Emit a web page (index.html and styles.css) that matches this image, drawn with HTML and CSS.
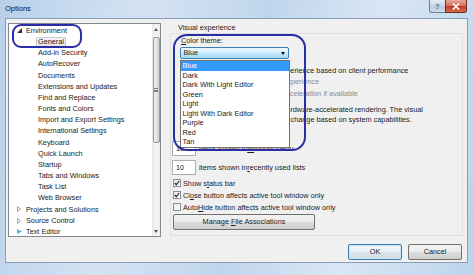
FILE: index.html
```html
<!DOCTYPE html>
<html lang="en">
<head>
  <meta charset="UTF-8">
  <title>Options</title>
  <link rel="stylesheet" href="styles.css">
</head>
<body>
  <div class="window">
    <!-- Tittellinje -->
    <div class="titlebar">
      <span class="title">Options</span>
      <div class="caption">
        <span class="cap-btn help">?</span>
        <span class="cap-btn close">
          <svg width="8" height="7" viewBox="0 0 8 7"><path d="M1 0.5 L7 6.5 M7 0.5 L1 6.5" stroke="#fff" stroke-width="1.6"/></svg>
        </span>
      </div>
    </div>

    <div class="client">
      <div class="main">
        <!-- Trevisning -->
        <div class="tree">
          <ul class="nodes">
            <li class="top"><span class="twisty"><svg width="5" height="5" viewBox="0 0 5 5"><polygon points="5,0 5,5 0,5" fill="#333"/></svg></span>Environment</li>
            <li class="child"><span class="item sel">General</span></li>
            <li class="child"><span class="item">Add-in Security</span></li>
            <li class="child"><span class="item">AutoRecover</span></li>
            <li class="child"><span class="item">Documents</span></li>
            <li class="child"><span class="item">Extensions and Updates</span></li>
            <li class="child"><span class="item">Find and Replace</span></li>
            <li class="child"><span class="item">Fonts and Colors</span></li>
            <li class="child"><span class="item">Import and Export Settings</span></li>
            <li class="child"><span class="item">International Settings</span></li>
            <li class="child"><span class="item">Keyboard</span></li>
            <li class="child"><span class="item">Quick Launch</span></li>
            <li class="child"><span class="item">Startup</span></li>
            <li class="child"><span class="item">Tabs and Windows</span></li>
            <li class="child"><span class="item">Task List</span></li>
            <li class="child"><span class="item">Web Browser</span></li>
            <li class="top"><span class="twisty"><svg width="4" height="6" viewBox="0 0 4 6"><polygon points="0.5,0.5 3.5,3 0.5,5.5" fill="none" stroke="#9a9a9a" stroke-width="0.9"/></svg></span>Projects and Solutions</li>
            <li class="top"><span class="twisty"><svg width="4" height="6" viewBox="0 0 4 6"><polygon points="0.5,0.5 3.5,3 0.5,5.5" fill="none" stroke="#9a9a9a" stroke-width="0.9"/></svg></span>Source Control</li>
            <li class="top"><span class="twisty"><svg width="5" height="5" viewBox="0 0 5 5"><polygon points="0,0 5,2.5 0,5" fill="#58b4e4"/></svg></span>Text Editor</li>
          </ul>
          <div class="vscroll">
            <div class="sb-btn"><span class="arrow-up"></span></div>
            <div class="sb-track">
              <div class="thumb"><span class="grip"></span></div>
            </div>
            <div class="sb-btn"><span class="arrow-down"></span></div>
          </div>
        </div>

        <!-- Innstillingsside -->
        <div class="page">
          <div class="group-title">Visual experience</div>
          <div class="panel">
            <div class="group">
              <div class="field-label"><u>C</u>olor theme:</div>
              <div class="combo">
                <span>Blue</span>
                <span class="arrow-down dark"></span>
                <ul class="listbox">
                  <li class="hl">Blue</li>
                  <li>Dark</li>
                  <li>Dark With Light Editor</li>
                  <li>Green</li>
                  <li>Light</li>
                  <li>Light With Dark Editor</li>
                  <li>Purple</li>
                  <li>Red</li>
                  <li>Tan</li>
                </ul>
              </div>
              <div class="opt first"><span class="box checked"><svg width="6" height="6" viewBox="0 0 6 6"><polyline points="0.8,3 2.3,4.7 5.2,1" fill="none" stroke="#2b2b2b" stroke-width="1.2"/></svg></span>Automatically adjust visual experience based on client performance</div>
              <div class="opt sub off"><span class="box"></span>Enable rich client visual experience</div>
              <div class="opt sub off"><span class="box checked"><svg width="6" height="6" viewBox="0 0 6 6"><polyline points="0.8,3 2.3,4.7 5.2,1" fill="none" stroke="#8a8a8a" stroke-width="1.2"/></svg></span>Use hardware graphics acceleration if available</div>
              <div class="note">Visual Studio is currently using hardware-accelerated rendering. The visual<br>experience settings automatically change based on system capabilities.</div>
            </div>

            <div class="num-row first"><span class="num">10</span>items shown in <u>W</u>indow menu</div>
            <div class="num-row"><span class="num">10</span>items shown in <u>r</u>ecently used lists</div>

            <div class="opt outer first"><span class="box checked"><svg width="6" height="6" viewBox="0 0 6 6"><polyline points="0.8,3 2.3,4.7 5.2,1" fill="none" stroke="#2b2b2b" stroke-width="1.2"/></svg></span>Show s<u>t</u>atus bar</div>
            <div class="opt outer"><span class="box checked"><svg width="6" height="6" viewBox="0 0 6 6"><polyline points="0.8,3 2.3,4.7 5.2,1" fill="none" stroke="#2b2b2b" stroke-width="1.2"/></svg></span>Cl<u>o</u>se button affects active tool window only</div>
            <div class="opt outer"><span class="box"></span>Auto <u>H</u>ide button affects active tool window only</div>

            <div class="btn manage">Manage <u>F</u>ile Associations</div>
          </div>
        </div>
      </div>

      <div class="footer">
        <div class="btn default">OK</div>
        <div class="btn">Cancel</div>
      </div>
    </div>

    <!-- Markeringer -->
    <div class="mark mark-tree"></div>
    <div class="mark mark-theme"></div>
  </div>
</body>
</html>
```

FILE: styles.css
```css
/* Generelle stiler */
* { box-sizing: border-box; }
body {
  margin: 0;
  font-family: "Liberation Sans", Arial, sans-serif;
  font-size: 7.3px;
  color: #1b1b1b;
  background: #c6d9ed;
}
ul { margin: 0; padding: 0; list-style: none; }
u { text-decoration: underline; }

.window {
  position: relative;
  width: 474px;
  height: 275px;
  padding: 0 6px 12px 5px;
  display: flex;
  flex-direction: column;
  overflow: hidden;
  background: linear-gradient(100deg, #b8d0ea 0%, #d4e3f3 28%, #c0d5ec 52%, #d9e7f5 74%, #bdd3eb 100%);
}

/* Tittellinje */
.titlebar {
  height: 18px;
  display: flex;
  justify-content: space-between;
  align-items: flex-start;
}
.title {
  font-size: 7.5px;
  line-height: 18px;
  color: #111;
}
.caption {
  display: flex;
  margin-right: 1px;
}
.cap-btn {
  height: 13px;
  display: flex;
  align-items: center;
  justify-content: center;
  border: 1px solid #6d7f98;
  border-top: none;
}
.help {
  width: 16px;
  border-right: none;
  border-radius: 0 0 0 3px;
  background: linear-gradient(#e3ecf6, #c6d6e8 50%, #b6c9df 51%, #cfdcec);
  font-size: 7px;
  font-weight: bold;
  color: #56677f;
}
.close {
  width: 22px;
  border-color: #6e2a20;
  border-radius: 0 0 3px 0;
  background: linear-gradient(#e9a99a, #d8705a 48%, #c4402a 52%, #d66a4e);
}

/* Klientområde */
.client {
  flex: 1;
  background: #f0f0f0;
  border: 1px solid #8a9db6;
  padding: 4px 4px 2px 2px;
  display: flex;
  flex-direction: column;
}
.main {
  display: flex;
  height: 214px;
}

/* Trevisning */
.tree {
  width: 153px;
  height: 214px;
  border: 1px solid #828790;
  background: #fff;
  display: flex;
}
.nodes {
  flex: 1;
  padding-top: 1.4px;
  overflow: hidden;
}
.nodes li {
  height: 11.17px;
  line-height: 11.17px;
  white-space: nowrap;
  display: flex;
  align-items: center;
}
.nodes li.top { padding-left: 8px; }
.nodes li.child { padding-left: 27px; }
.twisty {
  width: 9px;
  display: flex;
  align-items: center;
}
.item {
  line-height: 8px;
  padding: 0 1px;
  border: 1px solid transparent;
}
.item.sel {
  background: linear-gradient(#f6f6f6, #e4e4e4);
  border-color: #c8c8c8;
  border-radius: 1px;
}

.vscroll {
  width: 8px;
  display: flex;
  flex-direction: column;
  background: linear-gradient(90deg, #e6e6e6, #f4f4f4 40%, #eeeeee);
}
.sb-btn {
  height: 10px;
  display: flex;
  align-items: center;
  justify-content: center;
}
.sb-track {
  flex: 1;
  padding: 3px 0.5px 0;
}
.thumb {
  height: 106px;
  border: 1px solid #9a9a9a;
  border-radius: 2px;
  background: linear-gradient(90deg, #f4f4f4, #e2e2e2 50%, #d4d4d4);
  display: flex;
  align-items: center;
  justify-content: center;
}
.grip {
  width: 4px;
  height: 4px;
  border-top: 1px solid #7a7a7a;
  border-bottom: 1px solid #7a7a7a;
  position: relative;
}
.grip::after {
  content: "";
  position: absolute;
  left: 0;
  right: 0;
  top: 0.5px;
  border-top: 1px solid #7a7a7a;
}
.arrow-up {
  width: 0;
  height: 0;
  border-left: 2.5px solid transparent;
  border-right: 2.5px solid transparent;
  border-bottom: 3px solid #555;
}
.arrow-down {
  width: 0;
  height: 0;
  border-left: 2.5px solid transparent;
  border-right: 2.5px solid transparent;
  border-top: 3px solid #555;
}
.arrow-down.dark { border-top-color: #111; }

/* Innstillingsside */
.page {
  margin-left: 9px;
  width: 293px;
  display: flex;
  flex-direction: column;
}
.group-title {
  height: 10px;
  line-height: 10px;
  padding-left: 8px;
}
.panel {
  position: relative;
  height: 203px;
  border: 1px solid #e0e0e0;
  padding-left: 1px;
}
.group {
  padding: 1.5px 0 0 9px;
}
.field-label {
  line-height: 9px;
}
.combo {
  position: relative;
  margin: 2.5px 0 0 -1px;
  width: 109px;
  height: 12px;
  border: 1px solid #3c7fb1;
  border-radius: 2px;
  padding: 0 3px 0 2.5px;
  line-height: 10px;
  display: flex;
  justify-content: space-between;
  align-items: center;
  background: linear-gradient(#eaf6fd, #d9f0fc 45%, #bee6fd 55%, #a7d9f5);
}
.listbox {
  position: absolute;
  top: 12px;
  left: -1px;
  width: 110px;
  border: 1px solid #737373;
  background: #fff;
  z-index: 2;
}
.listbox li {
  height: 9.5px;
  line-height: 9.5px;
  padding-left: 1.5px;
  white-space: nowrap;
}
.listbox li.hl {
  background: #3399ff;
  color: #fff;
}

.opt {
  height: 11.5px;
  display: flex;
  align-items: center;
  white-space: nowrap;
}
.opt.first { margin-top: 5.25px; }
.opt.sub { margin-left: 14px; }
.opt.off { color: #8c8c8c; }
.box {
  width: 8px;
  height: 8px;
  margin-right: 2px;
  border: 1px solid #8e8f8f;
  background: linear-gradient(135deg, #e8e8e8, #fbfbfb);
  display: flex;
  align-items: center;
  justify-content: center;
  flex-shrink: 0;
}
.opt.off .box { border-color: #b5b5b5; }
.note {
  margin-top: 6.25px;
  line-height: 10px;
  white-space: nowrap;
}

.num-row {
  height: 15px;
  margin-top: 4px;
  display: flex;
  align-items: center;
  white-space: nowrap;
}
.num-row.first { margin-top: 16px; }
.num {
  width: 24px;
  height: 15px;
  margin-right: 3px;
  border: 1px solid #abadb3;
  background: #fff;
  padding-left: 3px;
  line-height: 13px;
}
.opt.outer {
  height: 12px;
  margin-left: 1px;
}
.opt.outer.first { margin-top: 2px; }

/* Knapper */
.btn {
  height: 16px;
  width: 54px;
  border: 1px solid #707070;
  border-radius: 2px;
  background: linear-gradient(#f2f2f2, #ebebeb 50%, #dddddd 51%, #cfcfcf);
  text-align: center;
  line-height: 14px;
}
.btn.manage {
  width: 142px;
  margin: 1px 0 0 1px;
}
.btn.default {
  border-color: #3c7fb1;
  background: linear-gradient(#f4f8fb, #e9eef3 50%, #dde5ec 51%, #d3dde6);
  box-shadow: inset 0 0 0 1px #c6e4f7;
}
.footer {
  margin-top: auto;
  display: flex;
  justify-content: flex-end;
  gap: 6px;
  padding-right: 1px;
}

/* Blå markeringer lagt oppå skjermbildet */
.mark {
  position: absolute;
  border: 2.5px solid #2a2ea4;
  z-index: 5;
}
.mark-tree {
  left: 12px;
  top: 24px;
  width: 70px;
  height: 24px;
  border-radius: 9px;
}
.mark-theme {
  left: 173px;
  top: 34px;
  width: 133px;
  height: 117px;
  border-radius: 14px;
}
```
